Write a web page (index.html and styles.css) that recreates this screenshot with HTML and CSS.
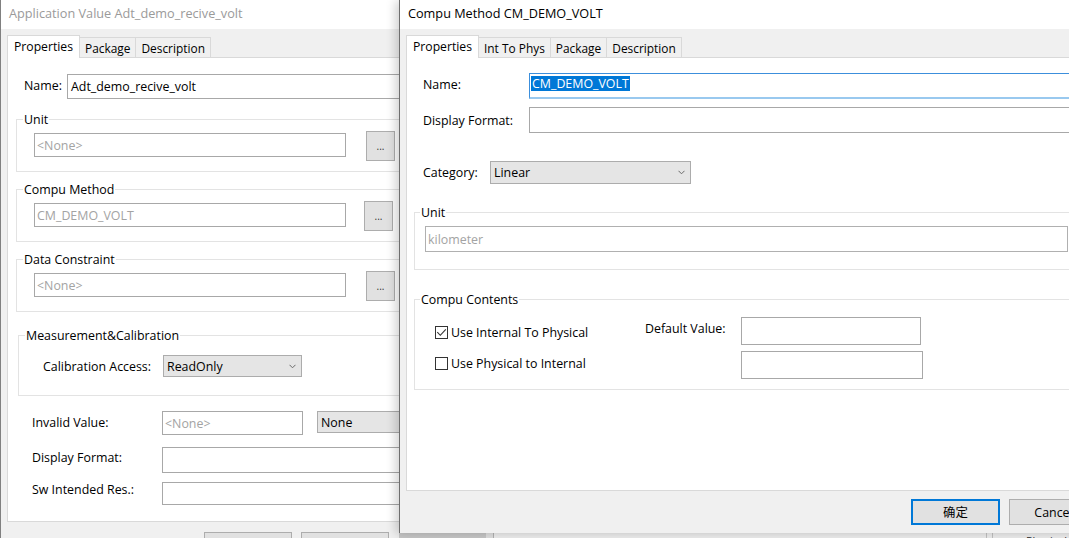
FILE: index.html
```html
<!DOCTYPE html>
<html>
<head>
<meta charset="utf-8">
<title>Compu Method</title>
<link rel="stylesheet" href="styles.css">
</head>
<body>
<div class="desktop">

  <section class="win win-back">
    <div class="titlebar inactive">Application Value Adt_demo_recive_volt</div>
    <div class="client">
      <div class="tabs">
        <div class="tab active">Properties</div>
        <div class="tab">Package</div>
        <div class="tab">Description</div>
      </div>
      <div class="panel panel-back">
        <div class="frow pb-name">
          <span class="lbl w-name">Name:</span>
          <div class="tb h25 grow">Adt_demo_recive_volt</div>
        </div>

        <fieldset class="grp gb gb-first">
          <legend>Unit</legend>
          <div class="pick">
            <div class="tb dis">&lt;None&gt;</div>
            <div class="dots">...</div>
          </div>
        </fieldset>

        <fieldset class="grp gb">
          <legend>Compu Method</legend>
          <div class="pick">
            <div class="tb dis">CM_DEMO_VOLT</div>
            <div class="dots dots-l">...</div>
          </div>
        </fieldset>

        <fieldset class="grp gb">
          <legend>Data Constraint</legend>
          <div class="pick">
            <div class="tb dis">&lt;None&gt;</div>
            <div class="dots">...</div>
          </div>
        </fieldset>

        <fieldset class="grp g-mc">
          <legend>Measurement&amp;Calibration</legend>
          <div class="mc-row">
            <span class="lbl w-cal">Calibration Access:</span>
            <div class="sel sel-cal"><span>ReadOnly</span><svg class="chev" width="7" height="5" viewBox="0 0 7 5"><polyline points="0.5,0.8 3.5,3.8 6.5,0.8" fill="none" stroke="#6a6a6a" stroke-width="1"/></svg></div>
          </div>
        </fieldset>

        <div class="brow b1">
          <span class="lbl w-b">Invalid Value:</span>
          <div class="tb dis tb-inv">&lt;None&gt;</div>
          <div class="sel sel-none"><span>None</span></div>
        </div>
        <div class="brow b2">
          <span class="lbl w-b">Display Format:</span>
          <div class="tb h26 grow"></div>
        </div>
        <div class="brow b3">
          <span class="lbl w-b">Sw Intended Res.:</span>
          <div class="tb h23 grow"></div>
        </div>
      </div>
      <div class="btnrow back-btns">
        <div class="btn btn-back"></div>
        <div class="btn btn-back"></div>
      </div>
    </div>
  </section>

  <div class="under">
    <div class="u1"></div>
    <div class="u2"></div>
    <div class="u3"></div>
    <div class="u4"></div>
    <div class="u5">Physical</div>
  </div>

  <section class="win win-front">
    <div class="titlebar">Compu Method CM_DEMO_VOLT</div>
    <div class="client">
      <div class="tabs">
        <div class="tab active">Properties</div>
        <div class="tab">Int To Phys</div>
        <div class="tab">Package</div>
        <div class="tab">Description</div>
      </div>
      <div class="panel panel-front">
        <div class="frow pf-name">
          <span class="lbl w-fl">Name:</span>
          <div class="tb focus grow"><span class="hl">CM_DEMO_VOLT</span></div>
        </div>
        <div class="frow pf-disp">
          <span class="lbl w-fl">Display Format:</span>
          <div class="tb h26 grow"></div>
        </div>
        <div class="frow pf-cat">
          <span class="lbl w-cat">Category:</span>
          <div class="sel sel-cat"><span>Linear</span><svg class="chev" width="7" height="5" viewBox="0 0 7 5"><polyline points="0.5,0.8 3.5,3.8 6.5,0.8" fill="none" stroke="#6a6a6a" stroke-width="1"/></svg></div>
        </div>

        <fieldset class="grp gf-unit">
          <legend>Unit</legend>
          <div class="tb dis tb-km">kilometer</div>
        </fieldset>

        <fieldset class="grp gf-cc">
          <legend>Compu Contents</legend>
          <div class="cc">
            <div class="checks">
              <div class="chk">
                <svg width="13" height="13" viewBox="0 0 13 13"><rect x="0.5" y="0.5" width="12" height="12" fill="#fff" stroke="#333"/><polyline points="2.3,6.2 5.3,9.3 10.8,3.4" fill="none" stroke="#333" stroke-width="1.1"/></svg>
                <span>Use Internal To Physical</span>
              </div>
              <div class="chk">
                <svg width="13" height="13" viewBox="0 0 13 13"><rect x="0.5" y="0.5" width="12" height="12" fill="#fff" stroke="#333"/></svg>
                <span>Use Physical to Internal</span>
              </div>
            </div>
            <div class="vals">
              <span class="lbl">Default Value:</span>
              <div class="tb tb-v1"></div>
              <span></span>
              <div class="tb tb-v2"></div>
            </div>
          </div>
        </fieldset>
      </div>
      <div class="btnrow front-btns">
        <div class="btn btn-def">确定</div>
        <div class="btn">Cancel</div>
      </div>
    </div>
  </section>

</div>
</body>
</html>
```

FILE: styles.css
```css
* { box-sizing: border-box; }
html, body { margin: 0; padding: 0; }
body {
  width: 1069px;
  height: 538px;
  overflow: hidden;
  background: #f0f0f0;
  font-family: "Open Sans", "Noto Sans CJK SC", sans-serif;
  font-size: 12.4px;
  color: #000;
}
.desktop { position: relative; width: 1069px; height: 538px; overflow: hidden; }

.win {
  position: absolute;
  top: 0;
  display: flex;
  flex-direction: column;
  background: #f0f0f0;
  overflow: hidden;
}
.win-back { left: 0; width: 470px; height: 538px; border-left: 1px solid #808080; }
.win-front {
  left: 399px;
  width: 720px;
  height: 533px;
  border-left: 1px solid #6e6e6e;
  box-shadow: -3px 1px 10px rgba(0, 0, 0, 0.2);
  z-index: 2;
  overflow: visible;
}

.titlebar {
  flex: none;
  height: 29px;
  line-height: 26px;
  padding-left: 8px;
  background: #fff;
  white-space: nowrap;
  font-size: 12.7px;
}
.titlebar.inactive { color: #9a9a9a; }

.client { flex: 1; padding: 6px 0 0 6px; }

.tabs { display: flex; align-items: flex-end; height: 22px; position: relative; z-index: 1; }
.tab {
  height: 20px;
  padding: 1px 5px 0;
  line-height: 18px;
  font-size: 11.9px;
  border: 1px solid #d9d9d9;
  border-bottom: 0;
  background: #f0f0f0;
  margin-left: -1px;
  white-space: nowrap;
}
.tab:first-child { margin-left: 0; }
.tab.active {
  height: 23px;
  padding: 2px 6px 0;
  font-size: 12.2px;
  background: #fff;
  margin-bottom: -1px;
  position: relative;
  z-index: 1;
}

.panel {
  background: #fff;
  border: 1px solid #d9d9d9;
  display: flex;
  flex-direction: column;
}
.panel-back { height: 465px; }
.panel-front { height: 434px; }

.frow, .brow { display: flex; align-items: flex-start; }
.lbl { line-height: 17px; white-space: nowrap; flex: none; }

.tb {
  flex: none;
  height: 24px;
  border: 1px solid #a8a8a8;
  background: #fff;
  padding: 0 3px;
  display: flex;
  align-items: center;
  white-space: nowrap;
  overflow: hidden;
}
.tb.dis { color: #a3a3a3; padding-left: 2px; }
.tb.grow { flex: 1; }
.h25 { height: 25px; }
.h26 { height: 26px; }
.h23 { height: 23px; }

/* back dialog */
.pb-name { margin: 16px 0 0 16px; }
.w-name { width: 43px; padding-top: 3px; }

.grp { margin: 0; min-width: 0; border: 1px solid #e3e3e3; padding: 3px 0 10px 6px; }
.grp legend { padding: 0 1px; line-height: 17px; }

.gb { margin: 9px 0 0 8px; }
.gb-first { margin-top: 12px; }
.pick { display: flex; align-items: flex-start; margin-left: 11px; }
.pick .tb { width: 312px; margin-top: 2px; }
.dots {
  flex: none;
  width: 29px;
  height: 30px;
  margin-left: 20px;
  background: #e1e1e1;
  border: 1px solid #adadad;
  display: flex;
  align-items: center;
  justify-content: center;
  font-size: 10px;
  color: #333;
}
.dots-l { margin-left: 18px; }

.g-mc { margin: 15px 0 0 10px; padding: 11px 0 18px 6px; }
.mc-row { display: flex; align-items: center; margin-left: 18px; }
.w-cal { width: 120px; }

.sel {
  flex: none;
  height: 22px;
  background: #e5e5e5;
  border: 1px solid #acacac;
  display: flex;
  align-items: center;
  justify-content: space-between;
  padding: 0 5px 0 3px;
  white-space: nowrap;
}
.sel-cal { width: 139px; }
.sel-none { width: 130px; margin-left: 14px; }

.brow { margin-left: 24px; }
.w-b { width: 130px; }
.b1 { margin-top: 15px; }
.b1 .lbl { padding-top: 3px; }
.tb-inv { width: 141px; }
.b2 { margin-top: 12px; }
.b2 .lbl { padding-top: 2px; }
.b3 { margin-top: 9px; }
.b3 .lbl { margin-top: -1px; }

.btnrow { display: flex; gap: 9px; }
.back-btns { margin: 10px 0 0 197px; }
.btn {
  flex: none;
  width: 89px;
  height: 26px;
  background: #e1e1e1;
  border: 1px solid #adadad;
  display: flex;
  align-items: center;
  justify-content: center;
  white-space: nowrap;
}
.btn-back { width: 88px; }
.btn-def { border-color: #0078d7; box-shadow: inset 0 0 0 1px #0078d7; }

/* front dialog */
.pf-name { margin: 15px 0 0 16px; }
.w-fl { width: 106px; padding-top: 3px; }
.tb.focus {
  height: 26px;
  align-items: flex-start;
  padding: 2px 1px 0;
  border-color: #3c8fdc;
  border-bottom: 2px solid #99c9ef;
}
.hl { background: #0078d7; color: #fff; line-height: 15px; padding: 0 1px; }
.pf-disp { margin: 8px 0 0 16px; }
.pf-disp .lbl { padding-top: 5px; }
.pf-cat { margin: 28px 0 0 16px; align-items: center; }
.w-cat { width: 67px; }
.sel-cat { width: 201px; height: 23px; }

.gf-unit { margin: 20px 0 0 7px; padding: 5px 0 17px 5px; }
.tb-km { width: 643px; height: 26px; margin-left: 5px; border-color: #b0b0b0; }

.gf-cc { margin: 21px 0 0 7px; padding: 9px 0 10px 5px; }
.cc { display: flex; }
.checks {
  flex: none;
  width: 210px;
  margin-left: 15px;
  padding-top: 7px;
  display: flex;
  flex-direction: column;
  gap: 14px;
}
.chk { display: flex; align-items: center; gap: 3px; line-height: 17px; white-space: nowrap; }
.chk svg { flex: none; display: block; }
.vals { display: grid; grid-template-columns: 96px auto; grid-template-rows: 28px 28px; row-gap: 6px; }
.vals .lbl { padding-top: 3px; }
.tb-v1 { width: 180px; height: 28px; }
.tb-v2 { width: 182px; height: 28px; }

.front-btns { margin: 8px 0 0 505px; }
.btn-def { font-family: "Noto Sans CJK SC", "Open Sans", sans-serif; }

/* fragment of a window behind, below the front dialog */
.under {
  position: absolute;
  left: 399px;
  top: 533px;
  width: 670px;
  height: 5px;
  display: flex;
  background: #f0f0f0;
  overflow: hidden;
  z-index: 1;
}
.u1 { width: 87px; background: #c9c9c9; }
.u2 { width: 8px; background: #e2e2e2; border-right: 1px solid #b5b5b5; }
.u3 { width: 493px; border-right: 1px solid #c4c4c4; }
.u4 { width: 6px; border-right: 1px solid #c4c4c4; }
.u5 { padding-left: 33px; font-size: 11px; line-height: 11px; padding-top: 2px; color: #333; white-space: nowrap; }
```
